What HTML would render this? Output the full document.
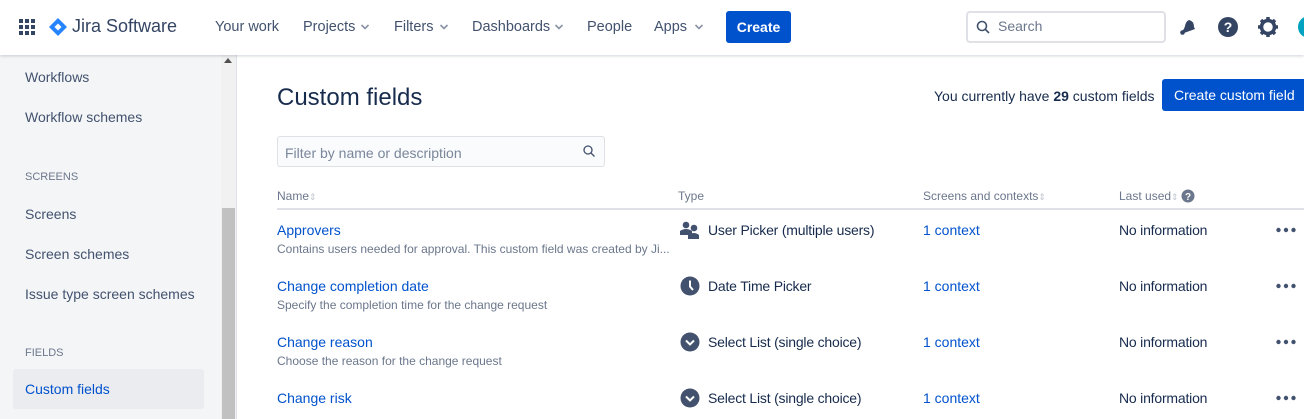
<!DOCTYPE html>
<html><head><style>
*{box-sizing:border-box;margin:0;padding:0}
body{width:1304px;height:419px;overflow:hidden;font-family:"Liberation Sans",sans-serif;background:#fff;position:relative;color:#172b4d}
.a{position:absolute;white-space:nowrap}
.nav{position:absolute;left:0;top:0;width:1304px;height:55px;background:#fff;box-shadow:0 1px 3px rgba(9,30,66,.2);z-index:5}
.nl{font-size:14.5px;color:#42526e;top:19px}
.side{position:absolute;left:0;top:55px;width:221px;height:364px;background:#f4f5f7}
.si{font-size:14px;color:#42526e;left:25px}
.sh{font-size:11px;color:#6b778c;left:25px}
.lk{color:#0052cc;font-size:14px}
.ds{color:#6b778c;font-size:12px}
.tp{font-size:14px;color:#172b4d;letter-spacing:-0.2px}
.th{font-size:12px;color:#6b778c;top:189px}
</style></head><body>
<div class="nav">
<svg class="a" style="left:19px;top:19px" width="16" height="16"><g fill="#344563"><rect x="0" y="0" width="4" height="4"/><rect x="6" y="0" width="4" height="4"/><rect x="12" y="0" width="4" height="4"/><rect x="0" y="6" width="4" height="4"/><rect x="6" y="6" width="4" height="4"/><rect x="12" y="6" width="4" height="4"/><rect x="0" y="12" width="4" height="4"/><rect x="6" y="12" width="4" height="4"/><rect x="12" y="12" width="4" height="4"/></g></svg>
<svg class="a" style="left:48px;top:17px" width="20" height="20" viewBox="0 0 20 20"><path d="M10 1 L19 10 L10 19 L1 10Z" fill="#2684ff"/><path d="M10 6.5 L13.5 10 L10 13.5 L6.5 10Z" fill="#fff"/></svg>
<div class="a" style="left:72px;top:16px;font-size:18px;color:#344563">Jira Software</div>
<div class="a nl" style="left:215px">Your work</div>
<div class="a nl" style="left:303px">Projects</div>
<div class="a nl" style="left:394px">Filters</div>
<div class="a nl" style="left:472px">Dashboards</div>
<div class="a nl" style="left:587px">People</div>
<div class="a nl" style="left:654px">Apps</div>
<svg class="a" style="left:360px;top:23px" width="10" height="8"><path d="M1.5 2L5 5.5L8.5 2" stroke="#8993a4" stroke-width="1.6" fill="none"/></svg>
<svg class="a" style="left:439px;top:23px" width="10" height="8"><path d="M1.5 2L5 5.5L8.5 2" stroke="#8993a4" stroke-width="1.6" fill="none"/></svg>
<svg class="a" style="left:554px;top:23px" width="10" height="8"><path d="M1.5 2L5 5.5L8.5 2" stroke="#8993a4" stroke-width="1.6" fill="none"/></svg>
<svg class="a" style="left:694px;top:23px" width="10" height="8"><path d="M1.5 2L5 5.5L8.5 2" stroke="#8993a4" stroke-width="1.6" fill="none"/></svg>
<div class="a" style="left:726px;top:11px;width:65px;height:32px;background:#0052cc;border-radius:3px;color:#fff;font-size:14px;font-weight:bold;text-align:center;line-height:32px">Create</div>
<div class="a" style="left:966px;top:11px;width:200px;height:32px;border:2px solid #dfe1e6;border-radius:4px"></div>
<svg class="a" style="left:976px;top:20px" width="14" height="14"><circle cx="6" cy="6" r="4.5" stroke="#42526e" stroke-width="1.6" fill="none"/><path d="M9.5 9.5L13 13" stroke="#42526e" stroke-width="1.6"/></svg>
<div class="a" style="left:998px;top:18px;font-size:14px;color:#6b778c">Search</div>
<svg class="a" style="left:1176px;top:16px" width="22" height="22" viewBox="0 0 22 22"><path d="M13 4 Q18 5 18 11 L19 13 L8 17 L5 16 Q8 14 9 10 Q10 5 13 4Z" fill="#344563"/><circle cx="6.5" cy="16.5" r="2.3" fill="#344563"/></svg>
<svg class="a" style="left:1217px;top:16px" width="22" height="22"><circle cx="11" cy="11" r="10" fill="#344563"/><text x="11" y="16" text-anchor="middle" fill="#fff" font-size="14" font-weight="bold" font-family="Liberation Sans">?</text></svg>
<svg class="a" style="left:1257px;top:16px" width="22" height="22" viewBox="0 0 22 22"><circle cx="11" cy="11" r="6.5" fill="none" stroke="#344563" stroke-width="3.5"/><g stroke="#344563" stroke-width="3.5"><path d="M11 1v4M11 17v4M1 11h4M17 11h4M4 4l3 3M15 15l3 3M4 18l3-3M15 7l3-3"/></g><circle cx="11" cy="11" r="3" fill="#fff"/></svg>
<div class="a" style="left:1298px;top:16px;width:22px;height:22px;border-radius:50%;background:#00a3bf"></div>
</div>
<div class="side">
<div class="a si" style="top:14px">Workflows</div>
<div class="a si" style="top:54px">Workflow schemes</div>
<div class="a sh" style="top:116px">SCREENS</div>
<div class="a si" style="top:151px">Screens</div>
<div class="a si" style="top:191px">Screen schemes</div>
<div class="a si" style="top:231px">Issue type screen schemes</div>
<div class="a sh" style="top:292px">FIELDS</div>
<div class="a" style="left:13px;top:314px;width:191px;height:40px;background:#ebecf0;border-radius:3px"></div>
<div class="a" style="left:25px;top:326px;font-size:14px;color:#0052cc">Custom fields</div>
</div>
<div class="a" style="left:221px;top:55px;width:15px;height:364px;background:#f1f1f1"></div>
<div class="a" style="left:222px;top:208px;width:13px;height:211px;background:#c1c1c1"></div>
<div class="a" style="left:224px;top:58px;width:0;height:0;border-left:4px solid transparent;border-right:4px solid transparent;border-bottom:5px solid #505050"></div>
<div class="a" style="left:236px;top:55px;width:1px;height:364px;background:#dfe1e6"></div>

<div class="a" style="left:277px;top:84px;font-size:24px;color:#172b4d">Custom fields</div>
<div class="a" style="left:934px;top:88px;font-size:14px;color:#172b4d">You currently have <b>29</b> custom fields</div>
<div class="a" style="left:1162px;top:79px;width:150px;height:32px;background:#0052cc;border-radius:3px;color:#fff;font-size:14px;line-height:32px;padding-left:12px">Create custom field</div>
<div class="a" style="left:277px;top:136px;width:328px;height:31px;border:1px solid #dfe1e6;border-radius:3px;background:#fafbfc"></div>
<div class="a" style="left:285px;top:145px;font-size:14px;color:#7a869a">Filter by name or description</div>
<svg class="a" style="left:583px;top:145px" width="12" height="12"><circle cx="5" cy="5" r="4" stroke="#42526e" stroke-width="1.3" fill="none"/><path d="M8 8L11.5 11.5" stroke="#42526e" stroke-width="1.3"/></svg>

<div class="a th" style="left:277px">Name<span style="color:#c1c7d0;font-size:9px">&#8661;</span></div>
<div class="a th" style="left:678px">Type</div>
<div class="a th" style="left:923px">Screens and contexts<span style="color:#c1c7d0;font-size:9px">&#8661;</span></div>
<div class="a th" style="left:1119px">Last used<span style="color:#c1c7d0;font-size:9px">&#8661;</span></div>
<svg class="a" style="left:1181px;top:189px" width="14" height="14"><circle cx="7" cy="7" r="6.5" fill="#6b778c"/><text x="7" y="11" text-anchor="middle" fill="#fff" font-size="10" font-weight="bold" font-family="Liberation Sans">?</text></svg>
<div class="a" style="left:277px;top:208px;width:1027px;height:2px;background:#dfe1e6"></div>

<div class="a lk" style="left:277px;top:222px">Approvers</div>
<div class="a ds" style="left:277px;top:242px">Contains users needed for approval. This custom field was created by Ji...</div>
<svg class="a" style="left:680px;top:221px" width="20" height="18"><circle cx="6" cy="4" r="3.3" fill="#42526e"/><path d="M0 10Q6 6 12 10V14H0Z" fill="#42526e"/><circle cx="14" cy="7" r="3.3" fill="#42526e"/><path d="M8 18V14Q14 10 19 14V18Z" fill="#42526e"/></svg>
<div class="a tp" style="left:708px;top:222px">User Picker (multiple users)</div>
<div class="a lk" style="left:923px;top:222px">1 context</div>
<div class="a tp" style="left:1119px;top:222px">No information</div>
<svg class="a" style="left:1276px;top:227px" width="20" height="6"><circle cx="2.5" cy="3" r="2.2" fill="#42526e"/><circle cx="10" cy="3" r="2.2" fill="#42526e"/><circle cx="17.5" cy="3" r="2.2" fill="#42526e"/></svg>

<div class="a lk" style="left:277px;top:278px">Change completion date</div>
<div class="a ds" style="left:277px;top:298px">Specify the completion time for the change request</div>
<svg class="a" style="left:680px;top:276px" width="20" height="20"><circle cx="10" cy="10" r="9.5" fill="#42526e"/><path d="M10 4.5V10.5L13 14" stroke="#fff" stroke-width="2" fill="none"/></svg>
<div class="a tp" style="left:708px;top:278px">Date Time Picker</div>
<div class="a lk" style="left:923px;top:278px">1 context</div>
<div class="a tp" style="left:1119px;top:278px">No information</div>
<svg class="a" style="left:1276px;top:283px" width="20" height="6"><circle cx="2.5" cy="3" r="2.2" fill="#42526e"/><circle cx="10" cy="3" r="2.2" fill="#42526e"/><circle cx="17.5" cy="3" r="2.2" fill="#42526e"/></svg>

<div class="a lk" style="left:277px;top:334px">Change reason</div>
<div class="a ds" style="left:277px;top:354px">Choose the reason for the change request</div>
<svg class="a" style="left:680px;top:332px" width="20" height="20"><circle cx="10" cy="10" r="9.5" fill="#42526e"/><path d="M6 8.5L10 12.5L14 8.5" stroke="#fff" stroke-width="2" fill="none"/></svg>
<div class="a tp" style="left:708px;top:334px">Select List (single choice)</div>
<div class="a lk" style="left:923px;top:334px">1 context</div>
<div class="a tp" style="left:1119px;top:334px">No information</div>
<svg class="a" style="left:1276px;top:339px" width="20" height="6"><circle cx="2.5" cy="3" r="2.2" fill="#42526e"/><circle cx="10" cy="3" r="2.2" fill="#42526e"/><circle cx="17.5" cy="3" r="2.2" fill="#42526e"/></svg>

<div class="a lk" style="left:277px;top:390px">Change risk</div>
<svg class="a" style="left:680px;top:388px" width="20" height="20"><circle cx="10" cy="10" r="9.5" fill="#42526e"/><path d="M6 8.5L10 12.5L14 8.5" stroke="#fff" stroke-width="2" fill="none"/></svg>
<div class="a tp" style="left:708px;top:390px">Select List (single choice)</div>
<div class="a lk" style="left:923px;top:390px">1 context</div>
<div class="a tp" style="left:1119px;top:390px">No information</div>
<svg class="a" style="left:1276px;top:395px" width="20" height="6"><circle cx="2.5" cy="3" r="2.2" fill="#42526e"/><circle cx="10" cy="3" r="2.2" fill="#42526e"/><circle cx="17.5" cy="3" r="2.2" fill="#42526e"/></svg>
</body></html>
